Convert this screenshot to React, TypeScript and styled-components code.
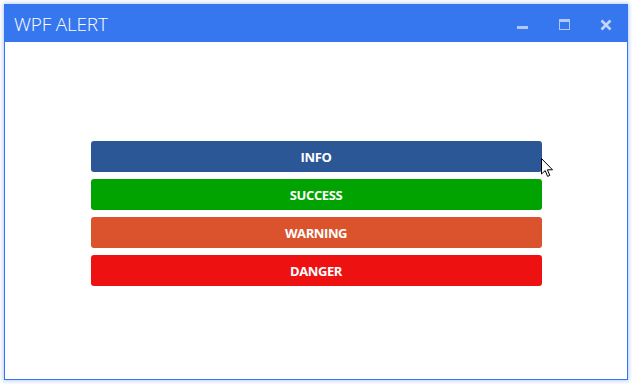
import React from 'react'
import styled, { createGlobalStyle } from 'styled-components'

const GlobalStyle = createGlobalStyle`
  html, body {
    margin: 0;
    padding: 0;
    background: #ffffff;
  }
  body {
    font-family: "Open Sans", "Noto Sans", sans-serif;
  }
`

const Page = styled.div`
  width: 632px;
  height: 384px;
  padding: 4px;
  box-sizing: border-box;
  position: relative;
`

const Window = styled.div`
  width: 624px;
  height: 376px;
  box-sizing: border-box;
  border: 1px solid #3375ee;
  box-shadow: 0 0 4px 1px rgba(51, 117, 238, 0.35);
  display: flex;
  flex-direction: column;
  background: #ffffff;
`

const TitleBar = styled.div`
  height: 37px;
  background: #3677f0;
  display: flex;
  align-items: center;
  padding-left: 9px;
  flex-shrink: 0;
`

const Title = styled.div`
  flex: 1;
  color: #ffffff;
  font-family: "Open Sans", "Noto Sans", sans-serif;
  font-weight: 300;
  font-size: 19px;
  letter-spacing: -0.2px;
  margin-top: 1px;
`

const Controls = styled.div`
  display: flex;
  align-items: center;
  height: 100%;
  padding-top: 2px;
  box-sizing: border-box;
`

const ControlButton = styled.div<{ $width: number }>`
  width: ${({ $width }) => $width}px;
  height: 100%;
  display: flex;
  align-items: center;
  justify-content: center;
`

const Content = styled.div`
  flex: 1;
  display: flex;
  flex-direction: column;
  align-items: center;
  gap: 7px;
  padding-top: 99px;
`

const AlertButton = styled.div<{ $color: string }>`
  width: 451px;
  height: 31px;
  border-radius: 3px;
  background: ${({ $color }) => $color};
  color: #ffffff;
  font-family: "Open Sans", "Noto Sans", sans-serif;
  font-weight: 700;
  font-size: 13px;
  letter-spacing: -0.4px;
  display: flex;
  align-items: center;
  justify-content: center;
`

const Cursor = styled.svg`
  position: absolute;
  left: 541px;
  top: 158px;
`

const iconColor = 'rgba(255,255,255,0.6)'

const buttons = [
  { label: 'INFO', color: '#2b5797' },
  { label: 'SUCCESS', color: '#00a300' },
  { label: 'WARNING', color: '#da532c' },
  { label: 'DANGER', color: '#ee1111' },
]

export default function App() {
  return (
    <Page>
      <GlobalStyle />
      <Window>
        <TitleBar>
          <Title>WPF ALERT</Title>
          <Controls>
            <ControlButton $width={42}>
              <svg width="11" height="11" viewBox="0 0 11 11">
                <rect x="0" y="7" width="11" height="3" fill={iconColor} />
              </svg>
            </ControlButton>
            <ControlButton $width={42}>
              <svg width="11" height="11" viewBox="0 0 11 11">
                <rect x="0.5" y="0.5" width="10" height="10" fill="none" stroke={iconColor} />
                <rect x="1" y="1" width="9" height="2" fill={iconColor} />
              </svg>
            </ControlButton>
            <ControlButton $width={42}>
              <svg width="12" height="12" viewBox="0 0 12 12">
                <path d="M1.5 1.5 L10.5 10.5 M10.5 1.5 L1.5 10.5" stroke="rgba(255,255,255,0.7)" strokeWidth="2.6" />
              </svg>
            </ControlButton>
          </Controls>
        </TitleBar>
        <Content>
          {buttons.map((b) => (
            <AlertButton key={b.label} $color={b.color}>
              {b.label}
            </AlertButton>
          ))}
        </Content>
      </Window>
      <Cursor width="13" height="20" viewBox="0 0 13 20">
        <path
          d="M0.5 0.5 L0.5 16 L4.2 12.6 L6.6 18.4 L8.8 17.4 L6.4 11.8 L11.5 11.8 Z"
          fill="#ffffff"
          stroke="#000000"
          strokeWidth="1"
          strokeLinejoin="round"
        />
      </Cursor>
    </Page>
  )
}
